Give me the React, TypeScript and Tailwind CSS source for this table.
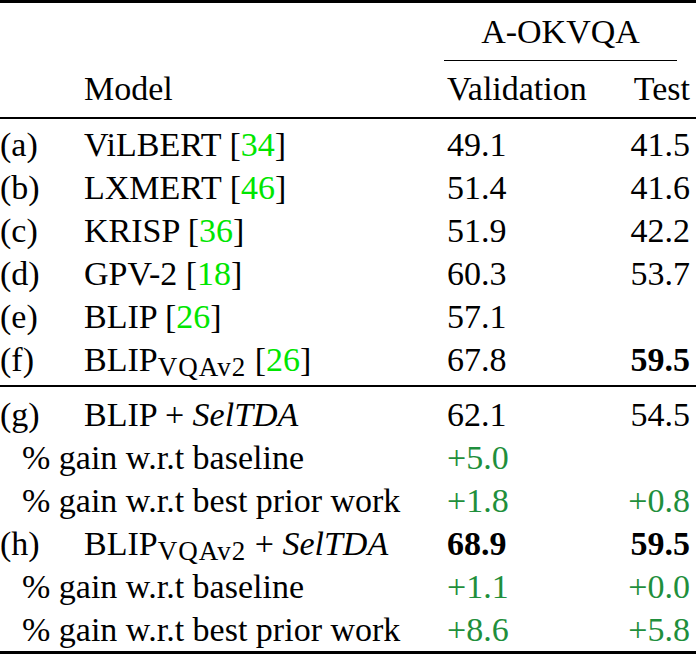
import type { ReactNode } from 'react'

type RowProps = {
    label?: string
    name: ReactNode
    val?: ReactNode
    test?: ReactNode
    gain?: boolean
}

const cite = (n: number) => (
    <>
        {' '}[<span className="text-[#00e600]">{n}</span>]
    </>
)

// subscript in the model name (BLIP_VQAv2)
const Sub = () => <span className="text-[27px] tracking-[1px] align-[-5px]">VQAv2</span>

function Row({ label, name, val, test, gain }: RowProps) {
    return (
        <div className="flex h-[43px] leading-[43px] whitespace-nowrap">
            {gain ? (
                <div className="w-[447px] pl-[22px]">{name}</div>
            ) : (
                <>
                    <div className="w-[84px]">{label}</div>
                    <div className="w-[363px]">{name}</div>
                </>
            )}
            <div className={`flex-1 ${gain ? 'text-[#1f8f3c]' : ''}`}>{val}</div>
            <div className={`text-right ${gain ? 'text-[#1f8f3c]' : ''}`}>{test}</div>
        </div>
    )
}

export default function App() {
    return (
        <div className="w-[696px] h-[654px] bg-white text-black text-[34px] font-['Liberation_Serif','Times_New_Roman',serif] overflow-hidden">
            <div className="pr-[6px]">
                {/* top rule */}
                <div className="h-[3px] bg-black mr-[-6px]" />

                {/* dataset header */}
                <div className="mt-[7px] h-[43px] leading-[43px] ml-[444px] w-[233px] text-center">A-OKVQA</div>
                <div className="mt-[7px] h-px bg-black ml-[444px] w-[233px]" />
                <div className="mt-[6px] flex h-[43px] leading-[43px]">
                    <div className="w-[84px]" />
                    <div className="w-[363px]">Model</div>
                    <div className="flex-1">Validation</div>
                    <div className="text-right">Test</div>
                </div>
                <div className="mt-[7px] h-[2px] bg-black mr-[-6px]" />

                {/* prior work */}
                <div className="mt-[4px]">
                    <Row label="(a)" name={<>ViLBERT{cite(34)}</>} val="49.1" test="41.5" />
                    <Row label="(b)" name={<>LXMERT{cite(46)}</>} val="51.4" test="41.6" />
                    <Row label="(c)" name={<>KRISP{cite(36)}</>} val="51.9" test="42.2" />
                    <Row label="(d)" name={<>GPV-2{cite(18)}</>} val="60.3" test="53.7" />
                    <Row label="(e)" name={<>BLIP{cite(26)}</>} val="57.1" />
                    <Row label="(f)" name={<>BLIP<Sub />{cite(26)}</>} val="67.8" test={<b>59.5</b>} />
                </div>
                <div className="mt-[4px] h-[2px] bg-black mr-[-6px]" />

                {/* ours */}
                <div className="mt-[6px]">
                    <Row label="(g)" name={<>BLIP + <i>SelTDA</i></>} val="62.1" test="54.5" />
                    <Row gain name="% gain w.r.t baseline" val="+5.0" />
                    <Row gain name="% gain w.r.t best prior work" val="+1.8" test="+0.8" />
                    <Row label="(h)" name={<>BLIP<Sub /> + <i>SelTDA</i></>} val={<b>68.9</b>} test={<b>59.5</b>} />
                    <Row gain name="% gain w.r.t baseline" val="+1.1" test="+0.0" />
                    <Row gain name="% gain w.r.t best prior work" val="+8.6" test="+5.8" />
                </div>
                <div className="h-[3px] bg-black mr-[-6px]" />
            </div>
        </div>
    )
}
